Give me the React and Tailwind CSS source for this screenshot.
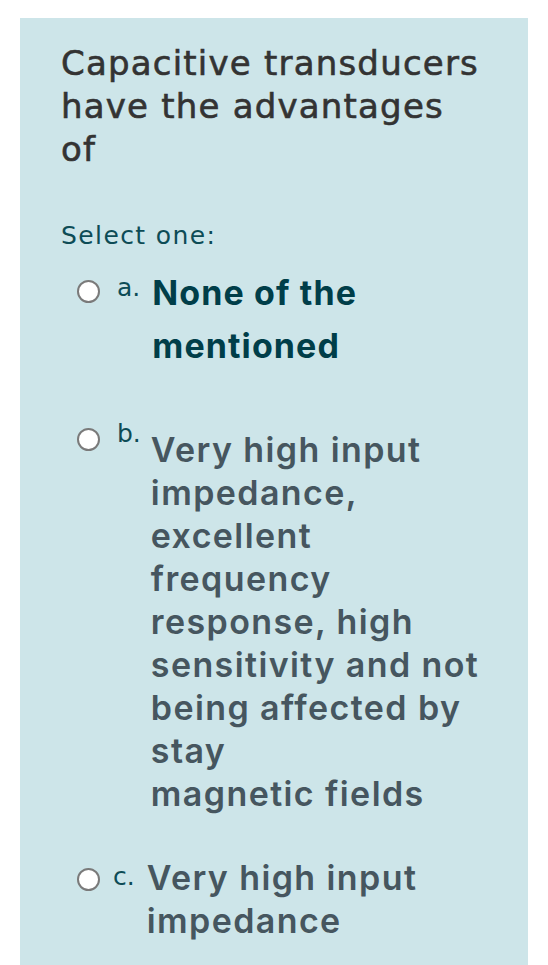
import React from "react";

function Radio({ className }) {
  return (
    <span
      className={
        "block h-[23px] w-[23px] shrink-0 rounded-full border-2 border-[#7a7a7a] bg-white " +
        (className || "")
      }
    />
  );
}

const dv = { fontFamily: "'DejaVu Sans', 'Liberation Sans', sans-serif" };
const it = { fontFamily: "Inter, 'Liberation Sans', sans-serif" };

export default function App() {
  return (
    <div className="min-h-[965px] bg-white pt-[18px] pl-[20px] pr-[20px]" style={it}>
      <div className="min-h-[947px] bg-[#cde5e9] pl-[41px] pr-[30px] pt-[24px]">
        <h1
          className="text-[34px] leading-[43px] font-normal tracking-[1.2px] text-[#333333] w-[440px] [-webkit-text-stroke:0.6px_#333333]"
          style={dv}
        >
          Capacitive transducers
          <br />
          have the advantages
          <br />
          of
        </h1>
        <p className="mt-[50px] text-[25px] leading-[30px] tracking-[1.4px] text-[#0d4c56]" style={dv}>
          Select one:
        </p>

        <div className="mt-[15px] flex items-start pl-[16px]">
          <Radio className="mt-[14px]" />
          <span className="ml-[17px] mt-[7px] text-[25px] leading-[30px] text-[#0d4c56]" style={dv}>
            a.
          </span>
          <div className="ml-[12px] text-[34px] leading-[53px] font-bold tracking-[1.1px] text-[#003e49]">
            None of the
            <br />
            mentioned
          </div>
        </div>

        <div className="mt-[56px] flex items-start pl-[16px]">
          <Radio className="mt-[0px]" />
          <span className="ml-[17px] -mt-[9px] text-[25px] leading-[30px] text-[#0d4c56]" style={dv}>
            b.
          </span>
          <div className="ml-[10px] text-[34px] leading-[43px] font-semibold tracking-[1.4px] text-[#46565f]">
            Very high input
            <br />
            impedance,
            <br />
            excellent
            <br />
            frequency
            <br />
            response, high
            <br />
            sensitivity and not
            <br />
            being affected by
            <br />
            stay
            <br />
            magnetic fields
          </div>
        </div>

        <div className="mt-[41px] flex items-start pl-[16px]">
          <Radio className="mt-[12px]" />
          <span className="ml-[13px] mt-[6px] text-[25px] leading-[30px] text-[#0d4c56]" style={dv}>
            c.
          </span>
          <div className="ml-[12px] text-[34px] leading-[43px] font-semibold tracking-[1.4px] text-[#46565f]">
            Very high input
            <br />
            impedance
          </div>
        </div>
      </div>
    </div>
  );
}
